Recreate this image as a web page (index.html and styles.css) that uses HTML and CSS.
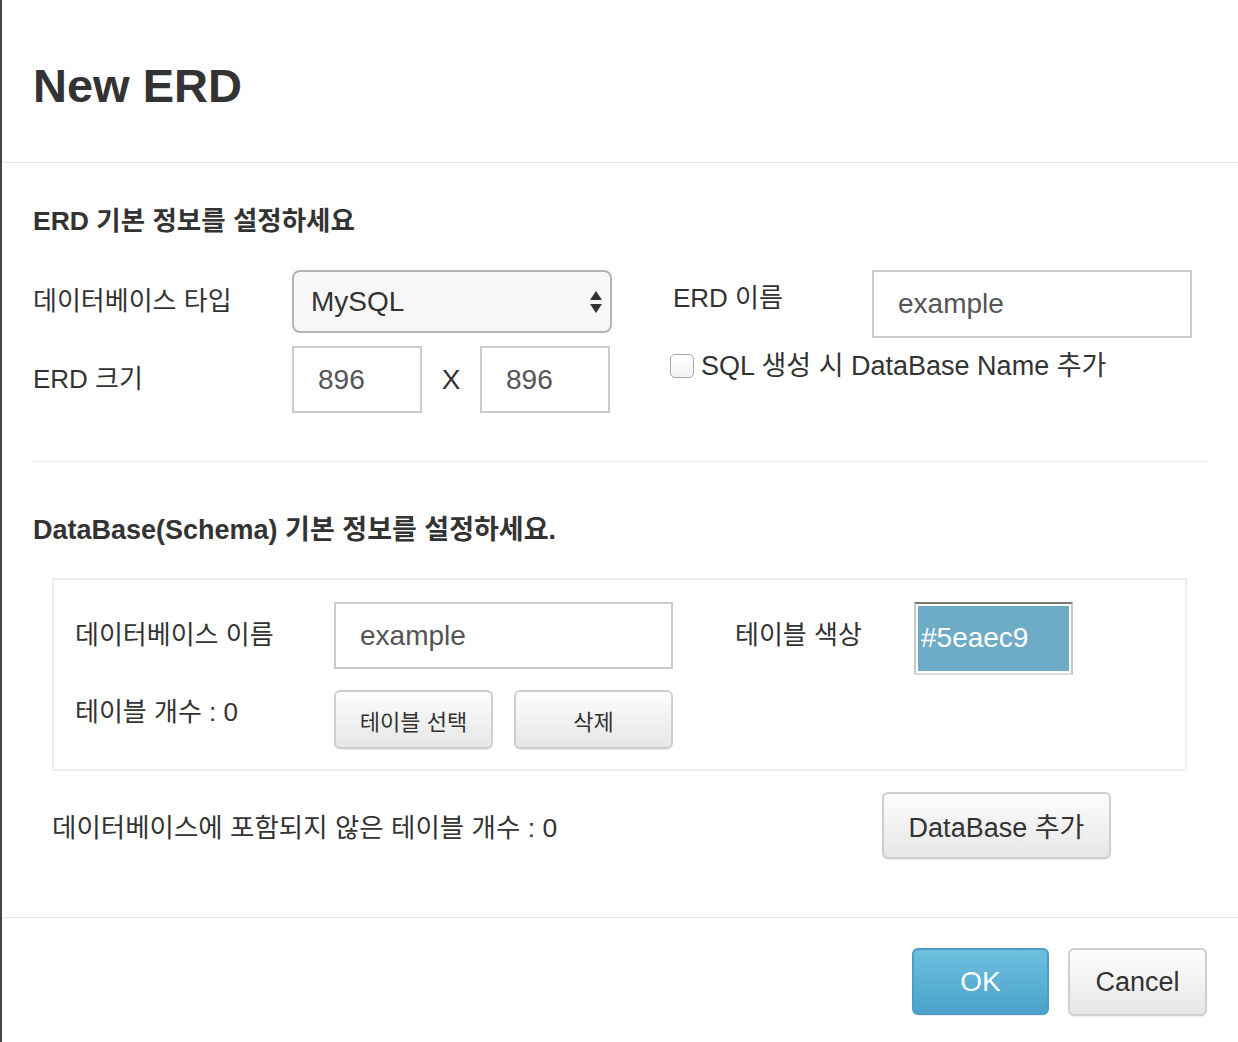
FILE: index.html
```html
<!DOCTYPE html>
<html lang="ko">
<head>
<meta charset="utf-8">
<title>New ERD</title>
<link rel="stylesheet" href="styles.css">
</head>
<body>
<div class="modal">
  <header class="modal-header">
    <h3 class="modal-title">New ERD</h3>
  </header>
  <main class="modal-body">
    <h4 class="section-title first">ERD 기본 정보를 설정하세요</h4>
    <div class="erd-grid">
      <label class="lbl lbl-type">데이터베이스 타입</label>
      <div class="select">
        <span>MySQL</span>
        <svg class="select-arrows" width="12" height="22" viewBox="0 0 12 22"><path d="M6 0 L12 9 L0 9 Z" fill="#333"/><path d="M0 13 L12 13 L6 22 Z" fill="#333"/></svg>
      </div>
      <label class="lbl lbl-name">ERD 이름</label>
      <input class="text-input name-input" type="text" value="example">
      <label class="lbl lbl-size">ERD 크기</label>
      <div class="size-group">
        <input class="text-input size-input" type="text" value="896">
        <span class="times">X</span>
        <input class="text-input size-input second" type="text" value="896">
      </div>
      <div class="check-row">
        <span class="checkbox"></span>
        <span class="check-text">SQL 생성 시 DataBase Name 추가</span>
      </div>
    </div>
    <hr class="divider">
    <h4 class="section-title second">DataBase(Schema) 기본 정보를 설정하세요.</h4>
    <div class="db-box">
      <label class="lbl box-lbl db-lbl">데이터베이스 이름</label>
      <input class="text-input db-input" type="text" value="example">
      <label class="lbl box-lbl color-lbl">테이블 색상</label>
      <div class="color-swatch"><div class="color-fill">#5eaec9</div></div>
      <label class="lbl count-lbl">테이블 개수 : 0</label>
      <div class="btn-pair">
        <button class="btn btn-small">테이블 선택</button>
        <button class="btn btn-small">삭제</button>
      </div>
    </div>
    <div class="bottom-row">
      <span class="lbl bottom-lbl">데이터베이스에 포함되지 않은 테이블 개수 : 0</span>
      <button class="btn btn-add">DataBase 추가</button>
    </div>
  </main>
  <footer class="modal-footer">
    <button class="btn btn-primary">OK</button>
    <button class="btn btn-cancel">Cancel</button>
  </footer>
</div>
</body>
</html>
```
FILE: styles.css
```css
* { box-sizing: border-box; }
html, body { margin: 0; padding: 0; background: #fff; }
body {
  font-family: "Liberation Sans", "Noto Sans CJK KR", sans-serif;
  color: #333;
  width: 1238px;
  height: 1042px;
  overflow: hidden;
}
.modal {
  border-left: 2px solid #454545;
  height: 1042px;
  background: #fff;
}
.modal-header {
  height: 163px;
  border-bottom: 1px solid #e5e5e5;
  display: flex;
  align-items: center;
  padding-left: 31px;
}
.modal-title {
  margin: 0;
  font-size: 47px;
  font-weight: 700;
  line-height: 52px;
  color: #333;
  padding-top: 10px;
}
.modal-body {
  padding: 0 30px 58px 30px;
}
.section-title {
  margin: 0;
  font-size: 27px;
  line-height: 34px;
  font-weight: 700;
  color: #333;
  padding-left: 1px;
}
.section-title.first { padding-top: 41px; font-size: 26.5px; }
.section-title.second { padding-top: 51px; }

.lbl {
  font-size: 26px;
  color: #333;
  white-space: nowrap;
}
.erd-grid {
  display: grid;
  grid-template-columns: 260px 320px 61px 199px 320px;
  grid-template-rows: 67px 67px;
  row-gap: 9px;
  margin-top: 32px;
  align-items: start;
}
.lbl-type { grid-column: 1; grid-row: 1; line-height: 63px; padding-left: 1px; }
.select {
  grid-column: 2; grid-row: 1;
  height: 63px;
  border: 2px solid #b4b4b4;
  border-radius: 8px;
  background: #f7f7f7;
  display: flex;
  align-items: center;
  justify-content: space-between;
  padding: 0 8px 0 17px;
  font-size: 28px;
  color: #333;
}
.select-arrows { display: block; margin-top: 1px; }
.lbl-name { grid-column: 4; grid-row: 1; line-height: 56px; }
.text-input {
  font-family: "Liberation Sans", "Noto Sans CJK KR", sans-serif;
  font-size: 28px;
  color: #555;
  border: 2px solid #ccc;
  background: #fff;
  height: 67px;
  padding: 0 0 0 24px;
  margin: 0;
  outline: none;
  border-radius: 0;
}
.name-input { grid-column: 5; grid-row: 1; width: 320px; height: 68px; }
.lbl-size { grid-column: 1; grid-row: 2; line-height: 66px; padding-left: 1px; }
.size-group {
  grid-column: 2; grid-row: 2;
  display: flex;
  align-items: center;
}
.size-input { width: 130px; }
.size-input.second { width: 130px; }
.times {
  width: 58px;
  text-align: center;
  font-size: 28px;
  color: #333;
}
.check-row {
  grid-column: 4 / 6; grid-row: 2;
  display: flex;
  align-items: center;
  margin-left: -3px;
  padding-top: 8px;
  gap: 7px;
}
.checkbox {
  width: 24px; height: 24px;
  border: 1px solid #a8a8a8;
  border-radius: 5px;
  background: linear-gradient(#fff, #f1f1f1);
  flex: none;
}
.check-text { font-size: 27px; line-height: 24px; white-space: nowrap; color: #333; }

.divider {
  border: 0;
  border-top: 1px solid #eaeaea;
  margin: 48px 0 0 0;
  height: 0;
}
.db-box {
  margin: 31px 21px 0 20px;
  border: 2px solid #eee;
  padding: 22px 20px 20px 21px;
  display: grid;
  grid-template-columns: 259px 339px 62px 179px 159px;
  grid-template-rows: 73px 59px;
  row-gap: 15px;
  align-items: start;
}
.box-lbl { line-height: 67px; }
.db-lbl { grid-column: 1; grid-row: 1; }
.db-input { width: 339px; grid-column: 2; grid-row: 1; }
.color-lbl { grid-column: 4; grid-row: 1; }
.color-swatch {
  grid-column: 5; grid-row: 1;
  width: 159px; height: 73px;
  border: 2px solid #c8c8c8;
  border-top-color: #777;
  border-bottom-color: #dcdcdc;
  padding: 2px;
  background: #fff;
}
.color-fill {
  height: 100%;
  background: #6eabc6;
  color: #fff;
  font-size: 28px;
  line-height: 63px;
  padding-left: 3px;
}
.count-lbl { line-height: 44px; grid-column: 1; grid-row: 2; }
.btn-pair { display: flex; gap: 21px; grid-column: 2; grid-row: 2; }
.btn {
  font-family: "Liberation Sans", "Noto Sans CJK KR", sans-serif;
  background: linear-gradient(#fdfdfd, #e6e6e6);
  border: 2px solid #cfcfcf;
  border-radius: 6px;
  box-shadow: 0 1px 1px rgba(0,0,0,0.08);
  color: #333;
  padding: 0;
  margin: 0;
  cursor: pointer;
}
.btn-small { width: 159px; height: 59px; font-size: 22px; }
.bottom-row {
  margin-top: 21px;
  padding-left: 20px;
  display: flex;
  align-items: center;
}
.bottom-lbl { font-size: 26.5px; }
.btn-add {
  margin-left: auto;
  margin-right: 97px;
  width: 229px; height: 67px;
  font-size: 27px;
}
.modal-footer {
  border-top: 1px solid #e5e5e5;
  padding: 30px 31px 0 0;
  display: flex;
  justify-content: flex-end;
  gap: 19px;
}
.btn-primary {
  width: 137px; height: 67px;
  background: linear-gradient(#6ec0de, #4aa1ca);
  border: 2px solid #4b9fc7;
  color: #fff;
  font-size: 28px;
}
.btn-cancel {
  width: 139px; height: 68px;
  font-size: 27px;
}
```
